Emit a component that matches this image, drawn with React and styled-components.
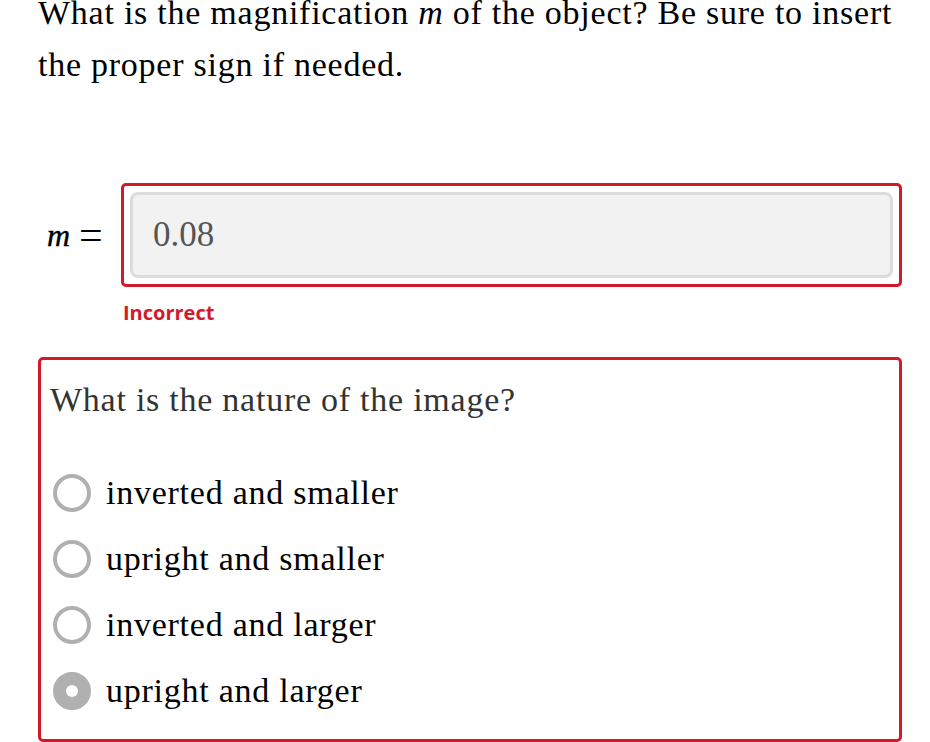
import React from "react";
import styled, { createGlobalStyle } from "styled-components";

const GlobalStyle = createGlobalStyle`
  html, body {
    margin: 0;
    padding: 0;
    background: #fff;
  }
  body {
    font-family: "Liberation Serif", "Times New Roman", serif;
    overflow: hidden;
  }
`;

const RED = "#d11a2a";

const Page = styled.div`
  width: 864px;
  padding-left: 38px;
`;

const Prompt = styled.p`
  margin: -13px 0 0 0;
  font-size: 34px;
  letter-spacing: 0.75px;
  line-height: 52px;
  color: #000;
`;

const AnswerRow = styled.div`
  display: flex;
  align-items: center;
  margin-top: 92px;
`;

const Label = styled.div`
  width: 83px;
  padding-left: 9px;
  box-sizing: border-box;
  display: flex;
  align-items: center;
  font-size: 32px;
  color: #000;
  white-space: nowrap;

  i {
    margin-right: 9px;
    -webkit-text-stroke: 0.4px #000;
  }
`;

const Equals = styled.span`
  font-size: 42px;
  line-height: 1;
`;

const InputFrame = styled.div`
  flex: 1;
  border: 3px solid ${RED};
  border-radius: 5px;
  padding: 6px;
`;

const Field = styled.div`
  height: 80px;
  display: flex;
  align-items: center;
  background: #f2f2f2;
  border: 3px solid #dcdcdc;
  border-radius: 8px;
  padding-left: 20px;
  font-size: 35px;
  color: #555;
`;

const Feedback = styled.div`
  margin: 12px 0 0 85px;
  font-family: "Open Sans", "Liberation Sans", sans-serif;
  font-weight: 700;
  font-size: 20px;
  line-height: 28px;
  color: ${RED};
`;

const ChoiceBox = styled.div`
  margin-top: 30px;
  border: 3px solid ${RED};
  border-radius: 5px;
  padding: 20px 9px 14px 9px;
  height: 385px;
  box-sizing: border-box;
`;

const Question = styled.div`
  font-size: 34px;
  letter-spacing: 0.75px;
  line-height: 40px;
  color: #333;
`;

const Options = styled.div`
  display: flex;
  flex-direction: column;
  gap: 28px;
  margin-top: 54px;
  padding-left: 3px;
`;

const Option = styled.label`
  display: flex;
  align-items: center;
  gap: 15px;
  font-size: 34px;
  letter-spacing: 0.75px;
  line-height: 38px;
  color: #000;
`;

const Radio = styled.span`
  width: 38px;
  height: 38px;
  box-sizing: border-box;
  border-radius: 50%;
  flex-shrink: 0;
  display: flex;
  align-items: center;
  justify-content: center;
  border: 4px solid #b0b0b0;
  background: ${(p) => (p.checked ? "#b0b0b0" : "#fff")};

  &::after {
    content: "";
    display: ${(p) => (p.checked ? "block" : "none")};
    width: 12px;
    height: 12px;
    border-radius: 50%;
    background: #fff;
  }
`;

const choices = [
  "inverted and smaller",
  "upright and smaller",
  "inverted and larger",
  "upright and larger",
];

export default function App() {
  return (
    <>
      <GlobalStyle />
      <Page>
        <Prompt>
          What is the magnification <i>m</i> of the object? Be sure to insert
          the proper sign if needed.
        </Prompt>

        <AnswerRow>
          <Label>
            <i>m</i>
            <Equals>=</Equals>
          </Label>
          <InputFrame>
            <Field>0.08</Field>
          </InputFrame>
        </AnswerRow>
        <Feedback>Incorrect</Feedback>

        <ChoiceBox>
          <Question>What is the nature of the image?</Question>
          <Options>
            {choices.map((c, i) => (
              <Option key={c}>
                <Radio checked={i === 3} />
                {c}
              </Option>
            ))}
          </Options>
        </ChoiceBox>
      </Page>
    </>
  );
}
